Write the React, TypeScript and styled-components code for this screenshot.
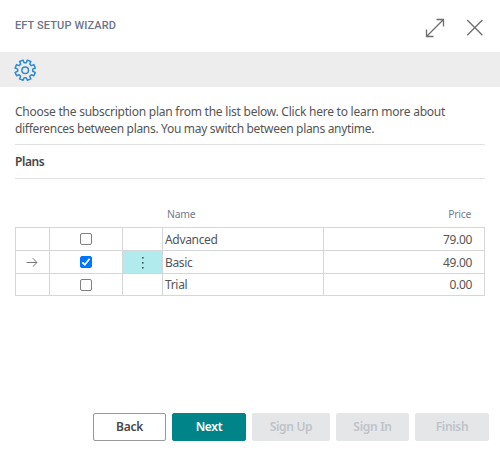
import React from "react";
import styled, { createGlobalStyle } from "styled-components";

const GlobalStyle = createGlobalStyle`
  * { box-sizing: border-box; }
  body { margin: 0; background: #fff; color: #555; font: 12px/17px "Noto Sans", sans-serif; }
`;

const Dialog = styled.main`
  width: 500px;
  height: 453px;
  display: flex;
  flex-direction: column;
  background: #fff;
`;

const Header = styled.header`
  height: 52px;
  display: flex;
  align-items: center;
  padding: 3px 16px 0 15px;
`;

const Title = styled.h1`
  margin: -4px auto 0 0;
  font: 500 11px/16px Roboto, sans-serif;
  letter-spacing: 0.12px;
  color: #6b7588;
`;

const IconButton = styled.button`
  display: flex;
  padding: 0;
  border: 0;
  background: none;
  color: #6e6e6e;
  & + & { margin-left: 21px; }
`;

const Toolbar = styled.div`
  height: 35px;
  flex: none;
  display: flex;
  align-items: center;
  padding-left: 14px;
  background: #ededed;
`;

const Body = styled.section`
  flex: 1;
  padding: 16px 15px 0;
`;

const Intro = styled.p`
  margin: 0 0 7px;
  white-space: nowrap;
`;

const Line = styled.span<{ $spacing: number }>`
  display: block;
  letter-spacing: ${(p) => p.$spacing}px;
`;

const SectionTitle = styled.h2`
  height: 35px;
  margin: 0;
  border: solid #e2e2e2;
  border-width: 1px 0;
  font-size: 12px;
  font-weight: 600;
  letter-spacing: -0.4px;
  line-height: 33px;
  color: #444;
`;

const Table = styled.div`
  margin-top: 22px;
  width: 470px;
`;

const Row = styled.div`
  display: grid;
  grid-template-columns: 35px 73px 40px 161px 161px;
  height: 23px;
  &:last-child { height: 22px; }
`;

const HeadRow = styled(Row)`
  height: 26px;
  line-height: 26px;
  color: #737c8c;
`;

const HeadCell = styled.div<{ $end?: boolean }>`
  grid-column: ${(p) => (p.$end ? 5 : 4)};
  padding: 0 14px 0 4px;
  text-align: ${(p) => (p.$end ? "right" : "left")};
  font-size: 10.4px;
  letter-spacing: -0.25px;
`;

const Rows = styled.div`
  border-top: 1px solid #d5d6da;
`;

const Cell = styled.div<{ $kind?: "text" | "number"; $active?: boolean }>`
  display: flex;
  align-items: center;
  justify-content: ${(p) =>
    p.$kind === "text" ? "flex-start" : p.$kind === "number" ? "flex-end" : "center"};
  padding: ${(p) => (p.$kind === "text" ? "0 2px" : p.$kind === "number" ? "0 12px 0 0" : "0")};
  border-right: 1px solid #d5d6da;
  border-bottom: 1px solid #d5d6da;
  background: ${(p) => (p.$active ? "#b2ebed" : "transparent")};
  letter-spacing: -0.33px;
  &:first-child { border-left: 1px solid #d5d6da; padding-right: 2px; }
`;

const Check = styled.span<{ $on: boolean }>`
  width: 12px;
  height: 12px;
  display: flex;
  border: 1px solid ${(p) => (p.$on ? "#0075ff" : "#808080")};
  border-radius: 2px;
  background: ${(p) => (p.$on ? "#0075ff" : "#fff")};
`;

const Footer = styled.footer`
  display: flex;
  gap: 6px;
  padding: 0 11px 12px 93px;
`;

const Button = styled.button<{ $tone?: "primary" | "disabled"; $width: number }>`
  width: ${(p) => p.$width}px;
  height: 28px;
  padding: 0;
  border: 1px solid
    ${(p) => (p.$tone === "primary" ? "#008489" : p.$tone === "disabled" ? "#e5e6e8" : "#999")};
  border-radius: 2px;
  background: ${(p) => (p.$tone === "primary" ? "#008489" : p.$tone === "disabled" ? "#e5e6e8" : "#fff")};
  color: ${(p) => (p.$tone === "primary" ? "#fff" : p.$tone === "disabled" ? "#bfc2ca" : "#484848")};
  font: 600 12px/26px "Noto Sans", sans-serif;
  letter-spacing: -0.3px;
`;

const TEETH = 8;

function gearPath(c: number, outer: number, inner: number): string {
  const step = 360 / TEETH;
  const at = (r: number, deg: number) => {
    const a = (deg * Math.PI) / 180;
    return `${(c + r * Math.cos(a)).toFixed(2)} ${(c + r * Math.sin(a)).toFixed(2)}`;
  };
  const points: string[] = [];
  for (let i = 0; i < TEETH; i++) {
    const mid = i * step + step / 2;
    points.push(at(inner, mid - 14), at(outer, mid - 10.5), at(outer, mid + 10.5), at(inner, mid + 14));
  }
  return `M${points.join("L")}Z`;
}

const GearIcon = () => (
  <svg width="22" height="22" viewBox="0 0 22 22" fill="none" stroke="#2d8bd4" strokeWidth="1.5" strokeLinejoin="round">
    <path d={gearPath(11.2, 10.3, 7.6)} />
    <circle cx="11.2" cy="11.2" r="3.3" />
  </svg>
);

const ExpandIcon = () => (
  <svg width="20" height="20" viewBox="0 0 20 20" fill="none" stroke="currentColor" strokeWidth="1.3">
    <path d="M1.5 18.5L18.5 1.5M11.5 1.5H18.5V8.5M1.5 11.5V18.5H8.5" />
  </svg>
);

const CloseIcon = () => (
  <svg width="18" height="18" viewBox="0 0 18 18" fill="none" stroke="currentColor" strokeWidth="1.3">
    <path d="M1.2 1L16.4 16.2M16.4 1L1.2 16.2" />
  </svg>
);

const ArrowIcon = () => (
  <svg width="12" height="10" viewBox="0 0 12 10" fill="none" stroke="#777" strokeWidth="1">
    <path d="M0.5 5.5H11M6.7 1.2L11 5.5L6.7 9.8" />
  </svg>
);

const TickIcon = () => (
  <svg width="10" height="10" viewBox="0 0 10 10" fill="none" stroke="#fff" strokeWidth="1.8">
    <path d="M1.3 5.3L3.8 7.7L8.6 1.8" />
  </svg>
);

const MoreIcon = () => (
  <svg width="3" height="13" viewBox="0 0 3 13" fill="#3d5a5c">
    <rect x="1" y="1" width="1.6" height="1.6" />
    <rect x="1" y="6" width="1.6" height="1.6" />
    <rect x="1" y="11" width="1.6" height="1.6" />
  </svg>
);

const plans = [
  { name: "Advanced", price: "79.00", selected: false },
  { name: "Basic", price: "49.00", selected: true },
  { name: "Trial", price: "0.00", selected: false },
];

export default function App() {
  return (
    <Dialog>
      <GlobalStyle />
      <Header>
        <Title>EFT SETUP WIZARD</Title>
        <IconButton aria-label="Expand"><ExpandIcon /></IconButton>
        <IconButton aria-label="Close"><CloseIcon /></IconButton>
      </Header>
      <Toolbar><GearIcon /></Toolbar>
      <Body>
        <Intro>
          <Line $spacing={-0.238}>Choose the subscription plan from the list below. Click here to learn more about</Line>
          <Line $spacing={-0.31}>differences between plans. You may switch between plans anytime.</Line>
        </Intro>
        <SectionTitle>Plans</SectionTitle>
        <Table>
          <HeadRow>
            <HeadCell>Name</HeadCell>
            <HeadCell $end>Price</HeadCell>
          </HeadRow>
          <Rows>
            {plans.map((plan) => (
              <Row key={plan.name}>
                <Cell>{plan.selected && <ArrowIcon />}</Cell>
                <Cell><Check $on={plan.selected}>{plan.selected && <TickIcon />}</Check></Cell>
                <Cell $active={plan.selected}>{plan.selected && <MoreIcon />}</Cell>
                <Cell $kind="text">{plan.name}</Cell>
                <Cell $kind="number">{plan.price}</Cell>
              </Row>
            ))}
          </Rows>
        </Table>
      </Body>
      <Footer>
        <Button $width={73}>Back</Button>
        <Button $width={74} $tone="primary">Next</Button>
        <Button $width={78} $tone="disabled">Sign Up</Button>
        <Button $width={73} $tone="disabled">Sign In</Button>
        <Button $width={74} $tone="disabled">Finish</Button>
      </Footer>
    </Dialog>
  );
}
